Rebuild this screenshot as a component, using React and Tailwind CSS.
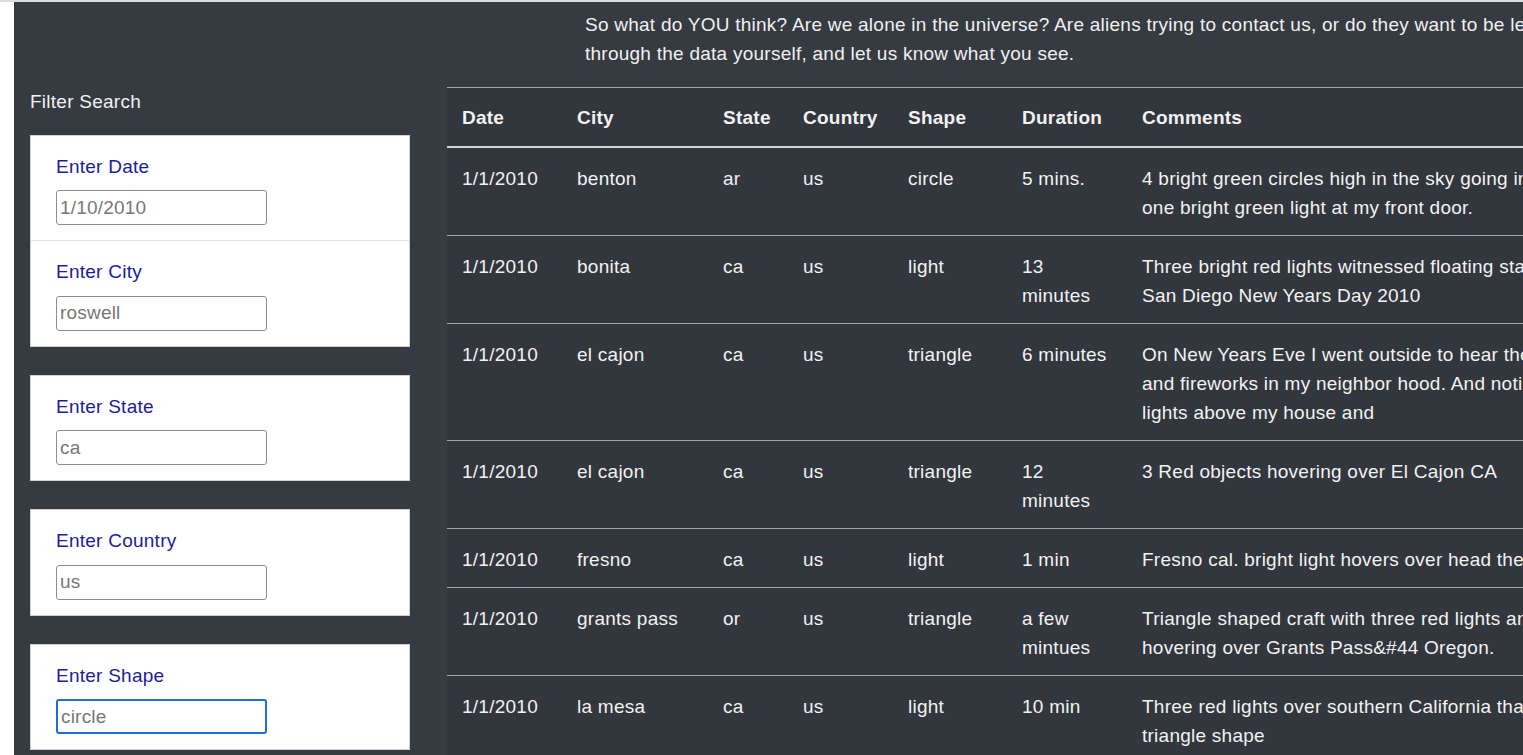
import React from 'react';

// UFO sightings table (filtered)
const sightings = [
  {
    date: '1/1/2010', city: 'benton', state: 'ar', country: 'us', shape: 'circle',
    duration: ['5 mins.'],
    comments: ['4 bright green circles high in the sky going in circles then', 'one bright green light at my front door.'],
  },
  {
    date: '1/1/2010', city: 'bonita', state: 'ca', country: 'us', shape: 'light',
    duration: ['13', 'minutes'],
    comments: ['Three bright red lights witnessed floating stationary over', 'San Diego New Years Day 2010'],
  },
  {
    date: '1/1/2010', city: 'el cajon', state: 'ca', country: 'us', shape: 'triangle',
    duration: ['6 minutes'],
    comments: ['On New Years Eve I went outside to hear the celebrations', 'and fireworks in my neighbor hood. And noticed three red', 'lights above my house and'],
  },
  {
    date: '1/1/2010', city: 'el cajon', state: 'ca', country: 'us', shape: 'triangle',
    duration: ['12', 'minutes'],
    comments: ['3 Red objects hovering over El Cajon CA'],
  },
  {
    date: '1/1/2010', city: 'fresno', state: 'ca', country: 'us', shape: 'light',
    duration: ['1 min'],
    comments: ['Fresno cal. bright light hovers over head then takes off at a high rate of speed'],
  },
  {
    date: '1/1/2010', city: 'grants pass', state: 'or', country: 'us', shape: 'triangle',
    duration: ['a few', 'mintues'],
    comments: ['Triangle shaped craft with three red lights and one white light', 'hovering over Grants Pass&#44 Oregon.'],
  },
  {
    date: '1/1/2010', city: 'la mesa', state: 'ca', country: 'us', shape: 'light',
    duration: ['10 min'],
    comments: ['Three red lights over southern California that formed a', 'triangle shape'],
  },
];

const filters = [
  [{ label: 'Enter Date', value: '1/10/2010' }, { label: 'Enter City', value: 'roswell' }],
  [{ label: 'Enter State', value: 'ca' }],
  [{ label: 'Enter Country', value: 'us' }],
  [{ label: 'Enter Shape', value: 'circle', focused: true }],
];

function FilterItem({ item, first }) {
  return (
    <li className={`px-[25px] pt-[17px] pb-[15px] ${first ? '' : 'border-t border-[#e4e4e4]'}`}>
      <label className="block text-[#1c1c9e] leading-[28.5px] mb-[9px]">{item.label}</label>
      <input
        type="text"
        placeholder={item.value}
        className={`block w-[211px] h-[35px] px-[3px] rounded-[3px] bg-white outline-none placeholder:text-[#777] text-[19px] tracking-[0.2px] ${
          item.focused ? 'border-2 border-[#1d6fd8]' : 'border border-[#8e8e8e]'
        }`}
      />
    </li>
  );
}

function Cell({ lines }) {
  return (
    <>
      {lines.map((l, i) => (
        <div key={i} className="whitespace-nowrap">{l}</div>
      ))}
    </>
  );
}

export default function App() {
  const td = 'px-[15px] pt-[15.5px] pb-[13.5px] align-top border-t border-[#a2a5a9]';
  const th = 'px-[15px] pt-[15px] pb-[14px] text-left font-bold align-bottom border-t border-[#a2a5a9] border-b-2 border-b-[#d2d4d6]';

  return (
    <div
      className="h-[755px] overflow-hidden bg-white text-[19px] leading-[29px] tracking-[0.25px]"
      style={{ fontFamily: '"Liberation Sans", Arial, sans-serif' }}
    >
      <div className="h-[2px] bg-[#dadee4]" />
      <div className="flex h-[753px]">
        <div className="w-[14px] bg-white shrink-0" />
        <div className="flex flex-1 bg-[#363a41] min-w-0">
          {/* sidebar */}
          <aside className="w-[433px] shrink-0 pl-[16px] pt-[86px]">
            <h5 className="text-[#f2f2f2] leading-[28.5px] mb-[18px]">Filter Search</h5>
            <div className="flex flex-col gap-[28px]">
              {filters.map((group, gi) => (
                <ul key={gi} className="w-[380px] bg-white border border-[#cfcfcf]">
                  {group.map((item, i) => (
                    <FilterItem key={item.label} item={item} first={i === 0} />
                  ))}
                </ul>
              ))}
            </div>
          </aside>

          {/* main */}
          <main className="flex-1 min-w-0 overflow-hidden pt-[8px]">
            <p className="pl-[138px] text-[#f0f0f0] mb-[19px]">
              <span className="block whitespace-nowrap">
                So what do YOU think? Are we alone in the universe? Are aliens trying to contact us, or do they want to be left alone? Dig
              </span>
              <span className="block whitespace-nowrap">through the data yourself, and let us know what you see.</span>
            </p>
            <table className="table-fixed border-collapse w-[1480px] bg-[#32363d] text-[#f2f2f2]">
              <colgroup>
                <col className="w-[115px]" />
                <col className="w-[146px]" />
                <col className="w-[80px]" />
                <col className="w-[105px]" />
                <col className="w-[114px]" />
                <col className="w-[120px]" />
                <col />
              </colgroup>
              <thead>
                <tr>
                  <th className={th}>Date</th>
                  <th className={th}>City</th>
                  <th className={th}>State</th>
                  <th className={th}>Country</th>
                  <th className={th}>Shape</th>
                  <th className={th}>Duration</th>
                  <th className={th}>Comments</th>
                </tr>
              </thead>
              <tbody>
                {sightings.map((s, i) => (
                  <tr key={i}>
                    <td className={td}>{s.date}</td>
                    <td className={td}>{s.city}</td>
                    <td className={td}>{s.state}</td>
                    <td className={td}>{s.country}</td>
                    <td className={td}>{s.shape}</td>
                    <td className={td}><Cell lines={s.duration} /></td>
                    <td className={td}><Cell lines={s.comments} /></td>
                  </tr>
                ))}
              </tbody>
            </table>
          </main>
        </div>
      </div>
    </div>
  );
}
